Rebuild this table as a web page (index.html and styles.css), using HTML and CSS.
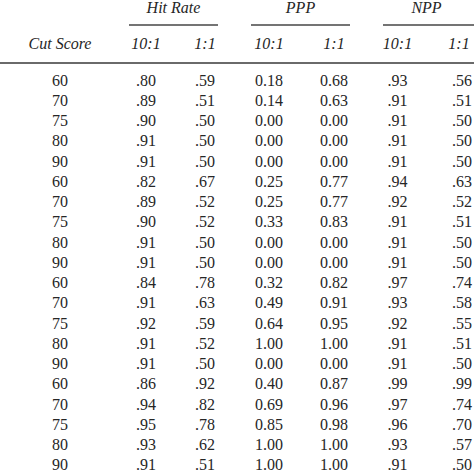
FILE: index.html
```html
<!DOCTYPE html>
<html>
<head>
<meta charset="utf-8">
<link rel="stylesheet" href="styles.css">
</head>
<body>
<div class="table">
  <div class="cell group-blank"></div>
  <div class="cell group g-hit"><span>Hit Rate</span></div>
  <div class="cell group g-ppp"><span>PPP</span></div>
  <div class="cell group g-npp"><span>NPP</span></div>

  <div class="cell sub">Cut Score</div>
  <div class="cell sub">10:1</div>
  <div class="cell sub">1:1</div>
  <div class="cell sub">10:1</div>
  <div class="cell sub">1:1</div>
  <div class="cell sub">10:1</div>
  <div class="cell sub last">1:1</div>

  <div class="cell">60</div><div class="cell">.80</div><div class="cell">.59</div><div class="cell">0.18</div><div class="cell">0.68</div><div class="cell">.93</div><div class="cell">.56</div>
  <div class="cell">70</div><div class="cell">.89</div><div class="cell">.51</div><div class="cell">0.14</div><div class="cell">0.63</div><div class="cell">.91</div><div class="cell">.51</div>
  <div class="cell">75</div><div class="cell">.90</div><div class="cell">.50</div><div class="cell">0.00</div><div class="cell">0.00</div><div class="cell">.91</div><div class="cell">.50</div>
  <div class="cell">80</div><div class="cell">.91</div><div class="cell">.50</div><div class="cell">0.00</div><div class="cell">0.00</div><div class="cell">.91</div><div class="cell">.50</div>
  <div class="cell">90</div><div class="cell">.91</div><div class="cell">.50</div><div class="cell">0.00</div><div class="cell">0.00</div><div class="cell">.91</div><div class="cell">.50</div>
  <div class="cell">60</div><div class="cell">.82</div><div class="cell">.67</div><div class="cell">0.25</div><div class="cell">0.77</div><div class="cell">.94</div><div class="cell">.63</div>
  <div class="cell">70</div><div class="cell">.89</div><div class="cell">.52</div><div class="cell">0.25</div><div class="cell">0.77</div><div class="cell">.92</div><div class="cell">.52</div>
  <div class="cell">75</div><div class="cell">.90</div><div class="cell">.52</div><div class="cell">0.33</div><div class="cell">0.83</div><div class="cell">.91</div><div class="cell">.51</div>
  <div class="cell">80</div><div class="cell">.91</div><div class="cell">.50</div><div class="cell">0.00</div><div class="cell">0.00</div><div class="cell">.91</div><div class="cell">.50</div>
  <div class="cell">90</div><div class="cell">.91</div><div class="cell">.50</div><div class="cell">0.00</div><div class="cell">0.00</div><div class="cell">.91</div><div class="cell">.50</div>
  <div class="cell">60</div><div class="cell">.84</div><div class="cell">.78</div><div class="cell">0.32</div><div class="cell">0.82</div><div class="cell">.97</div><div class="cell">.74</div>
  <div class="cell">70</div><div class="cell">.91</div><div class="cell">.63</div><div class="cell">0.49</div><div class="cell">0.91</div><div class="cell">.93</div><div class="cell">.58</div>
  <div class="cell">75</div><div class="cell">.92</div><div class="cell">.59</div><div class="cell">0.64</div><div class="cell">0.95</div><div class="cell">.92</div><div class="cell">.55</div>
  <div class="cell">80</div><div class="cell">.91</div><div class="cell">.52</div><div class="cell">1.00</div><div class="cell">1.00</div><div class="cell">.91</div><div class="cell">.51</div>
  <div class="cell">90</div><div class="cell">.91</div><div class="cell">.50</div><div class="cell">0.00</div><div class="cell">0.00</div><div class="cell">.91</div><div class="cell">.50</div>
  <div class="cell">60</div><div class="cell">.86</div><div class="cell">.92</div><div class="cell">0.40</div><div class="cell">0.87</div><div class="cell">.99</div><div class="cell">.99</div>
  <div class="cell">70</div><div class="cell">.94</div><div class="cell">.82</div><div class="cell">0.69</div><div class="cell">0.96</div><div class="cell">.97</div><div class="cell">.74</div>
  <div class="cell">75</div><div class="cell">.95</div><div class="cell">.78</div><div class="cell">0.85</div><div class="cell">0.98</div><div class="cell">.96</div><div class="cell">.70</div>
  <div class="cell">80</div><div class="cell">.93</div><div class="cell">.62</div><div class="cell">1.00</div><div class="cell">1.00</div><div class="cell">.93</div><div class="cell">.57</div>
  <div class="cell">90</div><div class="cell">.91</div><div class="cell">.51</div><div class="cell">1.00</div><div class="cell">1.00</div><div class="cell">.91</div><div class="cell">.50</div>
</div>
</body>
</html>
```
FILE: styles.css
```css
html, body {
  margin: 0;
  padding: 0;
  background: #ffffff;
  overflow: hidden;
}
body {
  width: 474px;
  height: 474px;
  font-family: "Liberation Serif", "Times New Roman", serif;
  font-size: 16px;
  color: #262626;
}
.table {
  display: grid;
  grid-template-columns: 120px 52px 66px 62px 68px 59px 70px;
  grid-template-rows: 26px 44.5px;
  grid-auto-rows: 20.25px;
  width: 497px;
}
.cell {
  text-align: center;
  line-height: 20.25px;
  white-space: nowrap;
}
.group {
  font-style: italic;
  height: 24px;
  line-height: 16px;
  border-bottom: 2px solid #747474;
  align-self: start;
}
.group-blank {
  height: 26px;
}
.g-hit {
  grid-column: 2 / 4;
  margin: 0 20px 0 9px;
}
.g-ppp {
  grid-column: 4 / 6;
  margin: 0 18px 0 13px;
}
.g-npp {
  grid-column: 6 / 8;
  margin: 0 22px 0 15px;
}
.g-npp span {
  padding-right: 5px;
}
.sub {
  font-style: italic;
  height: 36px;
  line-height: 36px;
  border-bottom: 2px solid #6a6a6a;
  align-self: start;
}
.sub.last {
  padding-right: 6px;
}
```
